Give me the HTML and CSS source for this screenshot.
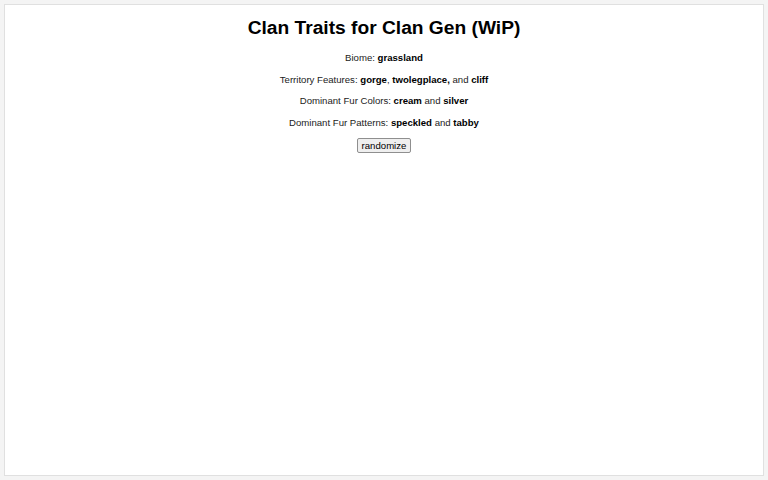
FILE: index.html
```html
<!DOCTYPE html>
<html lang="en">
<head>
    <meta charset="UTF-8">
    <meta name="viewport" content="width=device-width, initial-scale=1.0">
    <title>Clan Traits for Clan Gen (WiP)</title>
    <link rel="stylesheet" href="styles.css">
</head>
<body>
    <div class="container">
        <h1>Clan Traits for Clan Gen (WiP)</h1>

        <p>Biome: <b>grassland</b></p>
        <p>Territory Features: <b>gorge</b>, <b>twolegplace,</b> and <b>cliff</b></p>
        <p>Dominant Fur Colors: <b>cream</b> and <b>silver</b></p>
        <p>Dominant Fur Patterns: <b>speckled</b> and <b>tabby</b></p>

        <div class="actions">
            <button type="button">randomize</button>
        </div>
    </div>
</body>
</html>
```

FILE: styles.css
```css
html, body {
    height: 100%;
}

body {
    font-family: "Liberation Sans", Arial, sans-serif;
    font-size: 9.6px;
    color: #222;
    margin: 0;
    padding: 4px;
    box-sizing: border-box;
    background: #f4f4f4;
}

.container {
    height: 100%;
    box-sizing: border-box;
    background: white;
    border: 1px solid #e0e0e0;
    text-align: center;
}

h1 {
    font-size: 19.2px;
    line-height: 22px;
    color: #000;
    margin: 12px 0 13px;
}

p {
    margin: 10px 0 9px;
    line-height: 11.7px;
}

p b {
    color: #000;
}

.actions {
    margin-top: 9px;
}

button {
    font-family: "Liberation Sans", Arial, sans-serif;
    font-size: 9.6px;
    color: #000;
    padding: 1px 4px;
    background: #efefef;
    border: 1px solid #8f8f8f;
    border-radius: 2px;
}
```
